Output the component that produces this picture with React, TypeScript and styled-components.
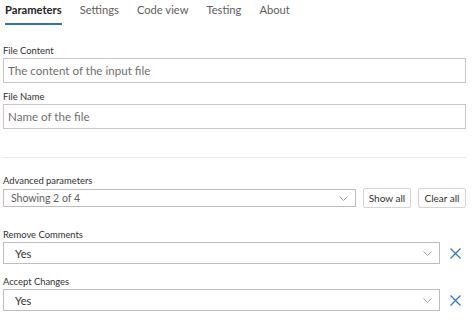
import React from "react";
import styled, { createGlobalStyle } from "styled-components";

const Global = createGlobalStyle`
  html, body { margin: 0; padding: 0; background: #fff; }
  body { font-family: Lato, "Noto Sans", Arial, sans-serif; color: #323130; }
`;

const Page = styled.div`
  width: 474px;
  height: 326px;
  overflow: hidden;
`;

const Tabs = styled.div`
  display: flex;
  gap: 18px;
  padding: 0 0 0 5px;
  height: 26px;
`;

const Tab = styled.div<{ $active?: boolean }>`
  position: relative;
  font-size: 11.2px;
  line-height: 20px;
  font-weight: ${(p) => (p.$active ? 700 : 400)};
  color: ${(p) => (p.$active ? "#252423" : "#5f5e5c")};
  &::after {
    content: "";
    position: absolute;
    left: 0;
    right: 0;
    top: 23px;
    height: 2px;
    background: ${(p) => (p.$active ? "#2d72bf" : "transparent")};
  }
`;

const Body = styled.div`
  padding: 0 8px 0 3px;
`;

const Field = styled.div<{ $top: number }>`
  margin-top: ${(p) => p.$top}px;
`;

const Label = styled.div`
  font-size: 9.4px;
  line-height: 12px;
  color: #323130;
  margin-bottom: 1px;
`;

const TextBox = styled.div`
  height: 23px;
  border: 1px solid #c8c6c4;
  display: flex;
  align-items: center;
  padding-left: 4px;
  font-size: 11.6px;
  color: #716f6d;
`;

const Divider = styled.div`
  height: 1px;
  background: #e6e6e6;
  margin-top: 28px;
`;

const Row = styled.div`
  display: flex;
  align-items: center;
`;

const Select = styled.div<{ $h: number }>`
  flex: 1;
  height: ${(p) => p.$h}px;
  border: 1px solid #bebdbc;
  display: flex;
  align-items: center;
  justify-content: space-between;
  padding: 0 7px 0 0;
  box-sizing: content-box;
`;

const SelectText = styled.span<{ $muted?: boolean }>`
  font-size: ${(p) => (p.$muted ? 10.5 : 11)}px;
  color: ${(p) => (p.$muted ? "#605e5c" : "#323130")};
  padding-left: ${(p) => (p.$muted ? 7 : 11)}px;
`;

const Button = styled.div<{ $ml: number }>`
  margin-left: ${(p) => p.$ml}px;
  width: 46px;
  height: 18px;
  border: 1px solid #d6d5d4;
  border-radius: 2px;
  display: flex;
  align-items: center;
  justify-content: center;
  font-size: 10px;
  color: #323130;
`;

const RemoveBtn = styled.div`
  width: 26px;
  display: flex;
  justify-content: flex-end;
  padding-right: 5px;
  box-sizing: border-box;
`;

const Chevron = () => (
  <svg width="9" height="5" viewBox="0 0 9 5">
    <path d="M0.5 0.5 L4.5 4.5 L8.5 0.5" fill="none" stroke="#a19f9d" strokeWidth="1" />
  </svg>
);

const Cross = () => (
  <svg width="11" height="11" viewBox="0 0 11 11">
    <path d="M0.5 0.5 L10.5 10.5 M10.5 0.5 L0.5 10.5" fill="none" stroke="#3074c2" strokeWidth="1.2" />
  </svg>
);

export default function App() {
  return (
    <Page>
      <Global />
      <Tabs>
        <Tab $active>Parameters</Tab>
        <Tab>Settings</Tab>
        <Tab>Code view</Tab>
        <Tab>Testing</Tab>
        <Tab>About</Tab>
      </Tabs>
      <Body>
        <Field $top={19}>
          <Label>File Content</Label>
          <TextBox>The content of the input file</TextBox>
        </Field>
        <Field $top={8}>
          <Label>File Name</Label>
          <TextBox>Name of the file</TextBox>
        </Field>
        <Divider />
        <Field $top={17}>
          <Label>Advanced parameters</Label>
          <Row>
            <Select $h={16}>
              <SelectText $muted>Showing 2 of 4</SelectText>
              <Chevron />
            </Select>
            <Button $ml={7}>Show all</Button>
            <Button $ml={7}>Clear all</Button>
          </Row>
        </Field>
        <Field $top={21}>
          <Label>Remove Comments</Label>
          <Row>
            <Select $h={20}>
              <SelectText>Yes</SelectText>
              <Chevron />
            </Select>
            <RemoveBtn>
              <Cross />
            </RemoveBtn>
          </Row>
        </Field>
        <Field $top={12}>
          <Label>Accept Changes</Label>
          <Row>
            <Select $h={20}>
              <SelectText>Yes</SelectText>
              <Chevron />
            </Select>
            <RemoveBtn>
              <Cross />
            </RemoveBtn>
          </Row>
        </Field>
      </Body>
    </Page>
  );
}
